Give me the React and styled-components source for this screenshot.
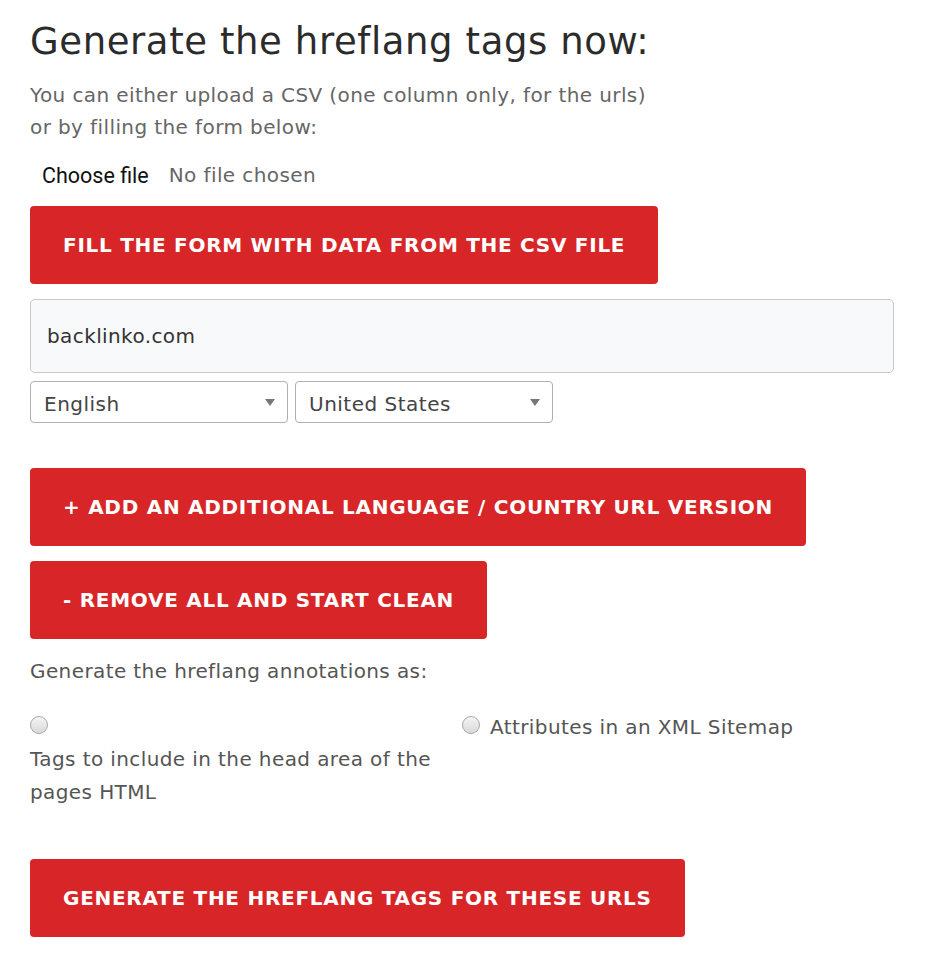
import React from "react";
import styled, { createGlobalStyle } from "styled-components";

const Global = createGlobalStyle`
  html, body { margin: 0; padding: 0; background: #fff; }
  body { font-family: "DejaVu Sans", "Liberation Sans", sans-serif; color: #555; }
  * { box-sizing: border-box; }
`;

const Page = styled.div`
  width: 927px;
  padding: 19px 33px 30px 30px;
  display: flex;
  flex-direction: column;
`;

const Heading = styled.h2`
  margin: 0;
  font-size: 37px;
  line-height: 46px;
  font-weight: 400;
  letter-spacing: 0.6px;
  color: #2b2b2b;
`;

const Intro = styled.p`
  margin: 14px 0 0;
  font-size: 20px;
  line-height: 32px;
  letter-spacing: 0.4px;
  color: #666;
  width: 630px;
`;

const FileRow = styled.div`
  display: flex;
  align-items: center;
  gap: 20px;
  margin-top: 18px;
  padding-left: 12px;
  height: 28px;
`;

const FileButton = styled.span`
  font-family: Roboto, "Liberation Sans", sans-serif;
  font-size: 21.5px;
  color: #111;
`;

const FileStatus = styled.span`
  font-size: 20px;
  letter-spacing: 0.4px;
  color: #666;
`;

const RedButton = styled.button`
  align-self: flex-start;
  display: inline-flex;
  align-items: center;
  height: 78px;
  padding: 0 33px;
  margin-top: ${(p) => p.$mt || 0}px;
  background: #d82528;
  border: none;
  border-radius: 4px;
  color: #fff;
  font-family: "DejaVu Sans", "Liberation Sans", sans-serif;
  font-weight: 700;
  font-size: 20px;
  letter-spacing: 0.72px;
  text-transform: uppercase;
  cursor: pointer;
`;

const UrlInput = styled.div`
  margin-top: 15px;
  height: 74px;
  border: 1px solid #c8c8c8;
  border-radius: 5px;
  background: #f8f9fb;
  display: flex;
  align-items: center;
  padding-left: 16px;
  font-size: 20px;
  letter-spacing: 0.4px;
  color: #333;
`;

const SelectRow = styled.div`
  display: flex;
  gap: 7px;
  margin-top: 8px;
`;

const Select = styled.div`
  width: 258px;
  height: 42px;
  border: 1px solid #b0b0b0;
  border-radius: 4px;
  background: #fff;
  display: flex;
  align-items: center;
  justify-content: space-between;
  padding: 4px 12px 0 13px;
  font-size: 20px;
  letter-spacing: 0.5px;
  color: #444;
`;

const Arrow = styled.span`
  width: 0;
  height: 0;
  margin-top: -4px;
  border-left: 5.5px solid transparent;
  border-right: 5.5px solid transparent;
  border-top: 7px solid #777;
`;

const Label = styled.div`
  margin-top: 16px;
  font-size: 20px;
  line-height: 32px;
  letter-spacing: 0.4px;
  color: #555;
`;

const RadioGrid = styled.div`
  display: grid;
  grid-template-columns: 432px 1fr;
  margin-top: 24px;
`;

const RadioOption = styled.label`
  display: flex;
  flex-direction: ${(p) => (p.$stack ? "column" : "row")};
  align-items: flex-start;
  gap: ${(p) => (p.$stack ? "9px" : "10px")};
  font-size: 20px;
  line-height: 33px;
  letter-spacing: 0.4px;
  color: #555;
`;

const Radio = styled.span`
  display: inline-block;
  flex: none;
  width: 18px;
  height: 18px;
  margin-top: ${(p) => p.$mt || 0}px;
  border-radius: 50%;
  border: 1px solid #a9a9a9;
  background: linear-gradient(#f4f4f4, #d9d9d9);
`;

export default function App() {
  return (
    <>
      <Global />
      <Page>
        <Heading>Generate the hreflang tags now:</Heading>
        <Intro>
          You can either upload a CSV (one column only, for the urls) or by filling the form below:
        </Intro>
        <FileRow>
          <FileButton>Choose file</FileButton>
          <FileStatus>No file chosen</FileStatus>
        </FileRow>
        <RedButton $mt={17}>Fill the form with data from the CSV file</RedButton>
        <UrlInput>backlinko.com</UrlInput>
        <SelectRow>
          <Select>
            English <Arrow />
          </Select>
          <Select>
            United States <Arrow />
          </Select>
        </SelectRow>
        <RedButton $mt={45}>+ Add an additional language / country URL version</RedButton>
        <RedButton $mt={15}>- Remove all and start clean</RedButton>
        <Label>Generate the hreflang annotations as:</Label>
        <RadioGrid>
          <RadioOption $stack>
            <Radio $mt={5} />
            <span>Tags to include in the head area of the pages HTML</span>
          </RadioOption>
          <RadioOption>
            <Radio $mt={5} />
            <span>Attributes in an XML Sitemap</span>
          </RadioOption>
        </RadioGrid>
        <RedButton $mt={50}>Generate the hreflang tags for these URLs</RedButton>
      </Page>
    </>
  );
}
